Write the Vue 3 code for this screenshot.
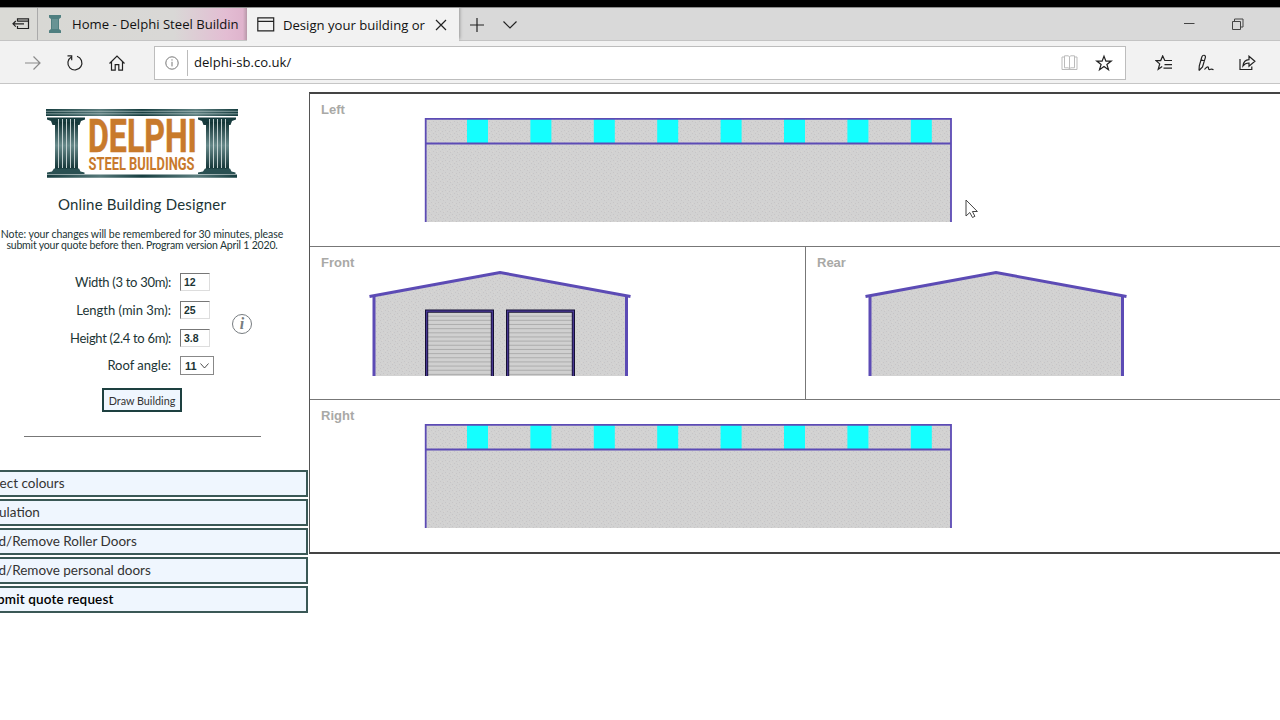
<template>
  <div class="window">
    <div class="tabstrip">
      <div class="tab_tools">
        <svg width="18" height="14" viewBox="0 0 18 14">
          <path d="M5.5 4.500V1.800h11v9.700h-11V9M5.500 4.200h11M1 6.800h11M3.800 4L1 6.800l2.800 2.800" />
        </svg>
      </div>
      <div class="tab tab_home">
        <svg class="favicon" width="12" height="18" viewBox="0 0 12 18">
          <path d="M0 0h12v2.500l-2 1.500v10l2 1.500V18H0v-2.500l2-1.500V4L0 2.500z" fill="#4f7f80" />
          <path d="M4 4v10M6 4v10M8 4v10" stroke="#8fb3b3" stroke-width=".8" />
        </svg>
        <span class="tab_title home_title">Home - Delphi Steel Buildin</span>
      </div>
      <div class="tab tab_active">
        <svg class="page_icon" width="18" height="16" viewBox="0 0 18 16">
          <path d="M.8 .8h15.900v13H.8zM.8 4.300h15.900" />
        </svg>
        <span class="tab_title active_title">Design your building or</span>
        <svg class="close" width="12" height="12" viewBox="0 0 12 12"><path d="M1 1l10 10M11 1L1 11" /></svg>
      </div>
      <svg class="plus" width="14" height="14" viewBox="0 0 14 14"><path d="M7 0v14M0 7h14" /></svg>
      <svg class="chev" width="14" height="8" viewBox="0 0 14 8"><path d="M.5.5L7 7 13.500.500" /></svg>
      <div class="window_buttons">
        <svg width="11" height="12" viewBox="0 0 11 12"><path d="M0 5.500h10.500" /></svg>
        <svg width="12" height="12" viewBox="0 0 12 12"><path d="M.5 3.500h8v8h-8zM2.500 3.500v-2.500h8.500v8h-2.500" /></svg>
      </div>
    </div>

    <div class="toolbar">
      <div class="nav">
        <svg class="grey" width="18" height="16" viewBox="0 0 18 16"><path d="M1 8h15.500M9.500 1.500L16 8l-6.500 6.500" /></svg>
        <svg width="18" height="18" viewBox="0 0 18 18">
          <path d="M11 2.300a7 7 0 1 1-5.600.6M1.500 1.800h4.200v4.400" />
        </svg>
        <svg width="18" height="18" viewBox="0 0 18 18">
          <path d="M1.500 9.500L9 2l7.500 7.500M3.500 7.500v8.700h3.700v-5.500h3.600v5.500h3.700V7.500" />
        </svg>
      </div>
      <div class="address">
        <svg class="site_info" width="14" height="14" viewBox="0 0 14 14">
          <circle cx="7" cy="7" r="6.200" />
          <path d="M7 5.800v4.600M7 3.300v1.300" />
        </svg>
        <span class="url">delphi-sb.co.uk/</span>
        <svg class="book" width="17" height="16" viewBox="0 0 17 16">
          <path d="M1 2h2.500V.8h4L8.500 2l1-1.200h4V2H16v12.500H1zM3.500 2v10.800h4l1 1.200 1-1.200h4V2M8.500 2v12" />
        </svg>
        <svg class="star" width="18" height="18" viewBox="0 0 18 18">
          <path d="M9 2.200l1.900 4.900h5.300l-4.300 3.300 1.600 5.300L9 12.500l-4.500 3.200 1.600-5.300L1.800 7.100h5.300z" />
        </svg>
      </div>
      <div class="actions">
        <svg width="18" height="16" viewBox="0 0 18 16">
          <path d="M17 5.500H9.800L7.700.9 5.700 5.600H1l3.700 3.300-1.500 5.400 4-2.700M9.500 9.700H17M8.500 13.200H17" />
        </svg>
        <svg width="18" height="18" viewBox="0 0 18 18">
          <path d="M2 16.500l.3-4.700L4.800 3C5.700.5 8.800.8 8.400 3.300L5.500 13 2 16.500M3.800 5.800l4 1.200M7.500 15.500c1.500-2 3.300-3.500 3.800-2.200s0 2.600 1.500 2.200 1.700-1 3.700.2" />
        </svg>
        <svg width="18" height="16" viewBox="0 0 18 16">
          <path d="M1 4v10.500h11.800V11.500M4 10.800c.5-4 2.500-6 6-6.100V1.200l5.900 5.100-5.900 4.900V8C7.300 7.900 5.500 8.800 4 10.800z" />
        </svg>
      </div>
    </div>

    <div class="page">
      <div class="sidebar">
        <svg class="logo" width="192" height="69" viewBox="0 0 192 69">
          <defs>
            <linearGradient id="beam">
              <stop offset="0" stop-color="#173e40" /><stop offset=".28" stop-color="#567879" />
              <stop offset=".5" stop-color="#173e40" /><stop offset=".78" stop-color="#5b7d7e" />
              <stop offset="1" stop-color="#173e40" />
            </linearGradient>
            <linearGradient id="shaft" x2="0" y2="1">
              <stop offset="0" stop-color="#123436" /><stop offset=".5" stop-color="#67898a" />
              <stop offset="1" stop-color="#123436" />
            </linearGradient>
          </defs>
          <path d="M0 0h192v7H0z" fill="url(#beam)" />
          <path d="M0 2.300h192M0 4.800h192" stroke="#c3d0d0" stroke-width=".6" />
          <g v-for="x in [0, 151]" :key="x" :transform="`translate(${x} 0)`">
            <path d="M1 8.500h38v2l-4 1.500-1.500 4H6.500L5 12l-4-1.500z" fill="#183c3e" />
            <path d="M9 13h23v47H9z" fill="url(#shaft)" />
            <path d="M12.500 10v49M16.500 10v49M20.500 10v49M24.500 10v49M28.500 10v49" stroke="#d5dfdf" stroke-width=".9" />
            <path d="M8 59.500h25l1.500 3 4 1v1.500H1v-1.500l5-1z" fill="#2a5052" />
          </g>
          <path d="M1 65.500h190v3.300H1z" fill="url(#beam)" />
          <text class="logo_name" x="42" y="43" textLength="109" lengthAdjust="spacingAndGlyphs">DELPHI</text>
          <text class="logo_sub" x="42.500" y="61" textLength="106" lengthAdjust="spacingAndGlyphs">STEEL BUILDINGS</text>
        </svg>
        <h1>Online Building Designer</h1>
        <p class="note">
          <span class="note_first">Note: your changes will be remembered for 30 minutes, please</span><br>
          <span class="note_second">submit your quote before then. Program version April 1 2020.</span>
        </p>

        <div class="form">
          <div class="fields">
            <template v-for="field in fields" :key="field.label">
              <label :class="{ tight: field.tight }">{{ field.label }}</label>
              <input type="text" v-model="field.value">
            </template>
            <label>Roof angle:</label>
            <div class="select">
              {{ roofAngle }}
              <svg width="9" height="6" viewBox="0 0 9 6"><path d="M.5.5l4 4.500 4-4.500" /></svg>
            </div>
          </div>
          <div class="info">i</div>
        </div>
        <button class="draw">Draw Building</button>
        <hr>
        <div class="menu">
          <div v-for="item in menu" :key="item" class="menu_item">{{ item }}</div>
          <div class="menu_item submit">Submit quote request</div>
        </div>
      </div>

      <div class="views">
        <div v-for="view in views" :key="view.name" class="view" :class="view.kind">
          <h2>{{ view.name }}</h2>

          <svg v-if="view.kind === 'side'" class="drawing" width="528" height="105" viewBox="0 0 528 105">
            <defs>
              <pattern id="grain" width="7" height="6" patternUnits="userSpaceOnUse">
                <path d="M0 0h7v6H0z" fill="#d2d2d2" />
                <path d="M0 0h1v1H0zM4 1h1v1H4zM2 3h1v1H2zM5 4h1v1H5z" fill="#c7c5c6" />
                <path d="M2 1h1v1H2zM6 3h1v1H6z" fill="#d9d6d3" />
              </pattern>
            </defs>
            <path d="M1 1h526v103H1z" fill="url(#grain)" />
            <rect v-for="n in 8" :key="n" class="rooflight" :x="43 + (n - 1) * 63.4" y="1" width="21" height="24" />
            <path class="trim" stroke-width="1.800" d="M1.700 104V.9h525.300V104" />
            <path class="trim" stroke-width="2.200" d="M1 25.500h526" />
          </svg>

          <svg v-else class="drawing" width="264" height="106" viewBox="0 0 264 106">
            <path d="M6 25L131 2l126 23v80H6z" fill="url(#grain)" />
            <g v-if="view.doors">
              <g v-for="x in [56, 137]" :key="x" :transform="`translate(${x} 38.500)`">
                <path d="M0 0h69v66.500H0z" fill="#d0d0d0" />
                <path v-for="n in 15" :key="n" class="slat" :d="`M3 ${2.500 + n * 4.160}h63`" />
                <path d="M0 0h69v66.500h-3.200V3.200H3.200v63.300H0z" fill="#151032" />
                <path d="M1 1.700h67M1.700 2v64.500M67.300 2v64.500" stroke="#4c3a9c" stroke-width="1.200" fill="none" />
              </g>
            </g>
            <path class="trim" stroke-width="3" d="M5 25v80M257.500 25v80" />
            <path class="trim" stroke-width="3" d="M.5 25.500L131 1.500l130.500 24" />
          </svg>
        </div>
      </div>
    </div>

    <svg class="cursor" width="14" height="20" viewBox="0 0 14 20">
      <path d="M1 1v16l3.800-3.500 2.700 5 2.400-1.200-2.500-4.800h5z" />
    </svg>
  </div>
</template>

<script setup>
import { ref } from 'vue';

const fields = ref([
  { label: 'Width (3 to 30m):', value: '12', tight: true },
  { label: 'Length (min 3m):', value: '25' },
  { label: 'Height (2.4 to 6m):', value: '3.8', tight: true },
]);
const roofAngle = ref(11);

const menu = ['Select colours', 'Insulation', 'Add/Remove Roller Doors', 'Add/Remove personal doors'];

const views = [
  { name: 'Left', kind: 'side' },
  { name: 'Front', kind: 'gable', doors: true },
  { name: 'Rear', kind: 'gable' },
  { name: 'Right', kind: 'side' },
];
</script>

<style>
body {
  margin: 0;
  background: #fff;
}
</style>

<style scoped>
* {
  box-sizing: border-box;
}

.window {
  position: relative;
  width: 1280px;
  height: 720px;
  overflow: hidden;
  border-top: 7px solid #000;
  background: #fff;
}

svg {
  display: block;
  flex: none;
}

.tabstrip svg,
.toolbar svg,
.select svg {
  fill: none;
  stroke: #222;
  stroke-width: 1.2;
}

.tabstrip {
  display: flex;
  align-items: center;
  height: 34px;
  background: #d9d9d9;
  border-top: 1px solid #8b8b8b;
  border-bottom: 1px solid #c4c4c4;
  font-family: "Open Sans", "Noto Sans", sans-serif;
  font-size: 13.1px;
  color: #111;
}

.tab_tools {
  display: flex;
  align-items: center;
  width: 38px;
  height: 100%;
  padding-left: 12px;
  background: #dadad6;
  border-right: 1px solid #aaa;
}

.tab {
  display: flex;
  align-items: center;
  height: 100%;
  white-space: nowrap;
}

.tab_home {
  width: 209px;
  padding-left: 11px;
  background: linear-gradient(90deg, #d8d8d4 0%, #d9d8d6 65%, #e3bdd3 90%, #dfb4cd 98%, #b899a9 100%);
}

.tabstrip .favicon {
  stroke: none;
}

.home_title {
  margin-left: 11px;
}

.tab_active {
  width: 212px;
  height: 34px;
  margin-bottom: -1px;
  padding-left: 10px;
  background: #f2f2f2;
  box-shadow: 2px -2px 3px -1px #999;
}

.active_title {
  width: 143px;
  margin: 0 9px 0 8px;
}

.plus {
  margin: 2px 0 0 11px;
}

.chev {
  margin: 1px 0 0 19px;
}

.window_buttons {
  display: flex;
  gap: 37px;
  margin-left: auto;
  padding: 0 36px 0 0;
}

.tabstrip .window_buttons svg {
  stroke: #444;
  stroke-width: 1;
}

.toolbar {
  display: flex;
  align-items: center;
  height: 43px;
  padding-top: 1px;
  background: #f2f2f2;
  border-bottom: 1px solid #c6c6c6;
}

.nav {
  display: flex;
  align-items: center;
  gap: 24px;
  width: 154px;
  padding-left: 24px;
}

.toolbar .grey {
  stroke: #8a8a8a;
}

.address {
  display: flex;
  align-items: center;
  width: 972px;
  height: 34px;
  border: 1px solid #bdbdbd;
  background: #fff;
  padding-left: 10px;
}

.toolbar .site_info {
  stroke: #777;
  stroke-width: 1;
}

.url {
  height: 26px;
  margin-left: 8px;
  padding-left: 6px;
  border-left: 1px solid #bbb;
  font-family: "Open Sans", "Noto Sans", sans-serif;
  font-size: 13.1px;
  line-height: 25px;
  color: #111;
}

.toolbar .book {
  margin-left: auto;
  stroke: #bbb;
  stroke-width: 1;
}

.star {
  margin: 0 12px 0 17px;
}

.actions {
  display: flex;
  align-items: center;
  gap: 24px;
  margin-left: 29px;
}

.page {
  display: flex;
  height: 636px;
}

/* centred column, its left edge is scrolled out of the window */
.sidebar {
  flex: none;
  display: flex;
  flex-direction: column;
  align-items: center;
  width: 334px;
  margin-left: -25px;
  padding-top: 25px;
  font-family: Lato, "Open Sans", sans-serif;
  color: #1c3535;
}

.logo {
  overflow: visible;
}

.logo_name,
.logo_sub {
  font-family: "Roboto", "Liberation Sans", sans-serif;
  font-weight: 700;
  fill: #c87a2c;
}

.logo_name {
  font-size: 46px;
  stroke: #c87a2c;
  stroke-width: .6;
}

.logo_sub {
  font-size: 19px;
}

h1 {
  margin: 16px 0 0;
  font-size: 15px;
  font-weight: 400;
  line-height: 20px;
  letter-spacing: .2px;
}

.note {
  width: 334px;
  margin: 15px 0 0;
  font-size: 10.5px;
  line-height: 11px;
  text-align: center;
  white-space: nowrap;
}

.note_first {
  letter-spacing: -.07px;
}

.note_second {
  letter-spacing: -.19px;
}

.form {
  display: flex;
  align-items: center;
  align-self: stretch;
  margin-top: 17px;
}

.fields {
  display: grid;
  grid-template-columns: 196px 34px;
  grid-template-rows: 28px 28px 28px 27px;
  column-gap: 9px;
  align-items: center;
  height: 111px;
}

label {
  padding-bottom: 1px;
  font-size: 13px;
  text-align: right;
}

.tight {
  letter-spacing: -.3px;
}

input {
  width: 30px;
  height: 18px;
  padding: 0 0 1px 3px;
  border: 1px solid #ddd;
  border-top-color: #777;
  border-left-color: #777;
  outline: none;
  font: bold 10.5px "Liberation Sans", Arial, sans-serif;
  color: #1c3535;
}

.select {
  display: flex;
  align-items: center;
  justify-content: space-between;
  width: 34px;
  height: 19px;
  padding: 0 4px;
  border: 1px solid #888;
  font: bold 11px "Liberation Sans", Arial, sans-serif;
}

.select svg {
  stroke-width: .8;
}

.info {
  width: 20px;
  height: 20px;
  margin-left: 18px;
  border: 1.5px solid #777c80;
  border-radius: 50%;
  font: italic bold 16px/17px "Liberation Serif", serif;
  text-align: center;
  color: #777c80;
}

.draw {
  width: 80px;
  height: 24px;
  margin-top: 9px;
  padding: 0;
  border: 2px solid #1d4040;
  background: #eff6fe;
  font-family: Lato, sans-serif;
  font-size: 10.8px;
  color: #333;
}

hr {
  width: 237px;
  height: 1px;
  margin: 24px 0 33px;
  border: 0;
  background: #777;
}

.menu {
  display: flex;
  flex-direction: column;
  gap: 2px;
  align-self: stretch;
  padding-right: 1px;
}

.menu_item {
  height: 27px;
  padding-left: 5px;
  border: 2px solid #3a5856;
  background: #eff6fe;
  font-size: 13.5px;
  line-height: 23px;
  white-space: nowrap;
  color: #333;
}

.submit {
  font-weight: 600;
  letter-spacing: .15px;
  color: #000;
}

.views {
  flex: none;
  display: grid;
  grid-template-columns: 495px 480px;
  grid-template-rows: 153px 153px 152px;
  width: 978px;
  height: 462px;
  margin-top: 8px;
  border: 2px solid #444;
  border-left: 1px solid #555;
}

.view {
  padding-top: 8px;
  border-bottom: 1px solid #777;
}

.side {
  grid-column: 1 / 3;
}

.view:last-child {
  border-bottom: 0;
}

.gable + .gable {
  border-left: 1px solid #777;
}

h2 {
  height: 16px;
  margin: 0 0 0 11px;
  font: bold 13px/16px "Liberation Sans", Arial, sans-serif;
  color: #a9a9a6;
}

.drawing {
  margin-left: 114px;
}

.gable .drawing {
  margin-left: 59px;
}

.trim {
  fill: none;
  stroke: #5c4bb5;
}

.rooflight {
  fill: #14ffff;
}

.slat {
  stroke: #a4a4a4;
  stroke-width: .8;
}

.cursor {
  position: absolute;
  left: 965px;
  top: 192px;
  fill: #fff;
  stroke: #444;
  stroke-width: 1;
}
</style>
